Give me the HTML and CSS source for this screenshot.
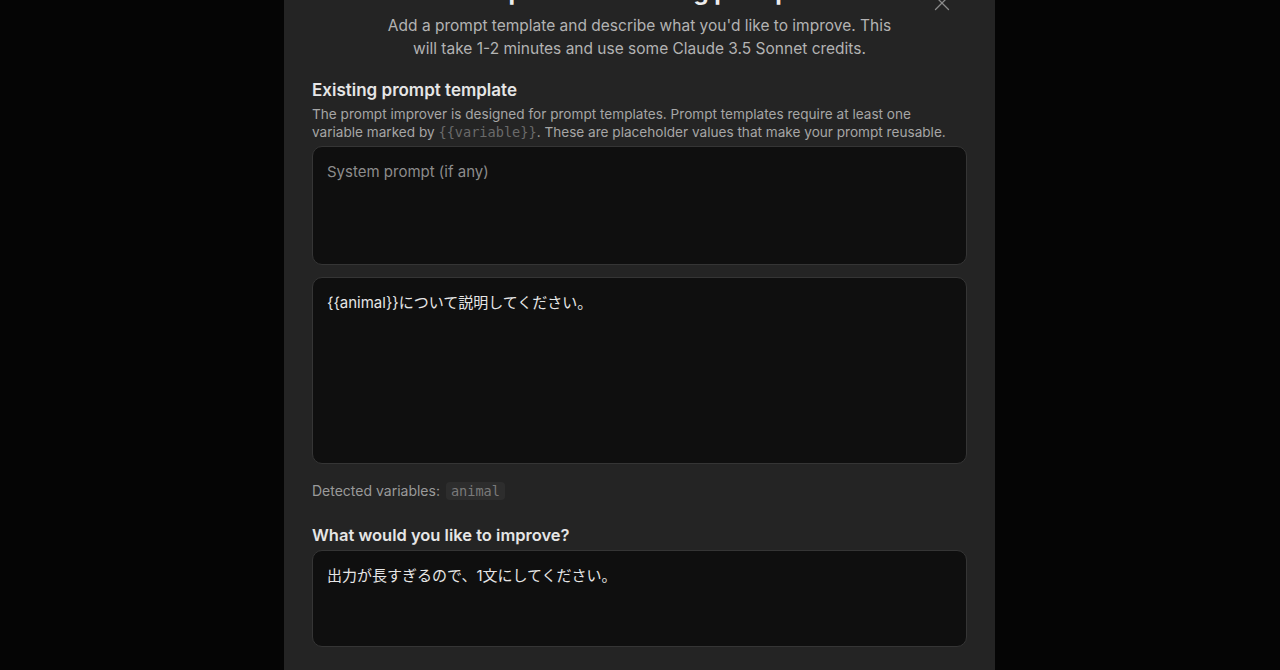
FILE: index.html
```html
<!DOCTYPE html>
<html lang="en">
<head>
    <meta charset="UTF-8">
    <meta name="viewport" content="width=device-width, initial-scale=1.0">
    <title>Improve an existing prompt</title>
    <link rel="stylesheet" href="styles.css">
</head>
<body>
    <div class="modal">
        <h2 class="title">Improve an existing prompt</h2>
        <p class="subtitle">Add a prompt template and describe what you'd like to improve. This will take 1-2 minutes and use some Claude 3.5 Sonnet credits.</p>

        <h3 class="section-title">Existing prompt template</h3>
        <p class="hint">The prompt improver is designed for prompt templates. Prompt templates require at least one variable marked by <code class="var">{{variable}}</code>. These are placeholder values that make your prompt reusable.</p>

        <div class="fields">
            <textarea class="field field-system" placeholder="System prompt (if any)"></textarea>
            <textarea class="field field-user">{{animal}}について説明してください。</textarea>
        </div>

        <p class="detected">Detected variables: <code class="badge">animal</code></p>

        <h3 class="section-title improve-title">What would you like to improve?</h3>
        <textarea class="field field-feedback">出力が長すぎるので、1文にしてください。</textarea>

        <button class="close" aria-label="Close">
            <svg class="close-icon" width="16" height="16" viewBox="0 0 16 16"><path d="M1.5 1.5L14.5 14.5M14.5 1.5L1.5 14.5" stroke="currentColor" stroke-width="1.3" stroke-linecap="round"/></svg>
        </button>
    </div>
</body>
</html>
```

FILE: styles.css
```css
body {
    margin: 0;
    background: #050505;
    font-family: Inter, "Noto Sans CJK JP", sans-serif;
    overflow: hidden;
}

/* flow-root keeps the title's negative margin inside the modal */
.modal {
    display: flow-root;
    position: relative;
    width: 711px;
    min-height: 700px;
    margin: 0 0 0 284px;
    padding: 0 28px;
    box-sizing: border-box;
    background: #242424;
}

.close {
    position: absolute;
    top: -5px;
    left: 650px;
    z-index: 1;
    padding: 0;
    border: none;
    background: none;
    color: #8a8a8a;
    cursor: pointer;
}

.close-icon {
    display: block;
}

.title {
    margin: -24px 0 0;
    font-size: 24px;
    line-height: 32px;
    font-weight: 700;
    color: #ececec;
    text-align: center;
}

.subtitle {
    max-width: 520px;
    margin: 6px auto 0;
    font-size: 15.5px;
    line-height: 23px;
    color: #b3b3b3;
    text-align: center;
}

.section-title {
    margin: 18px 0 0;
    font-size: 17px;
    line-height: 24px;
    font-weight: 600;
    color: #e6e6e6;
}

.improve-title {
    margin-top: 22px;
    font-size: 16.5px;
}

.hint {
    max-width: 640px;
    margin: 3px 0 0;
    font-size: 13.6px;
    line-height: 18px;
    color: #a6a6a6;
}

.var,
.badge {
    font-family: "DejaVu Sans Mono", monospace;
    font-size: 13.6px;
    color: #6a6a6a;
}

.fields {
    display: flex;
    flex-direction: column;
    gap: 12px;
    margin-top: 5px;
}

.field {
    display: block;
    width: 100%;
    box-sizing: border-box;
    padding: 13px 14px 12px;
    border: 1px solid #353535;
    border-radius: 10px;
    background: #0f0f0f;
    font-family: Inter, "Noto Sans CJK JP", sans-serif;
    font-size: 15px;
    line-height: 24px;
    color: #e6e6e6;
    resize: none;
    outline: none;
}

.field::placeholder {
    color: #8c8c8c;
}

.field-system {
    height: 119px;
}

.field-user {
    height: 187px;
}

.field-feedback {
    height: 97px;
    margin-top: 3px;
}

.detected {
    margin: 17px 0 0;
    font-size: 14px;
    line-height: 20px;
    color: #9a9a9a;
}

.badge {
    display: inline-block;
    padding: 0 5px;
    margin-left: 2px;
    border-radius: 4px;
    background: #2d2d2d;
    color: #7a7a7a;
    line-height: 18px;
}
```
